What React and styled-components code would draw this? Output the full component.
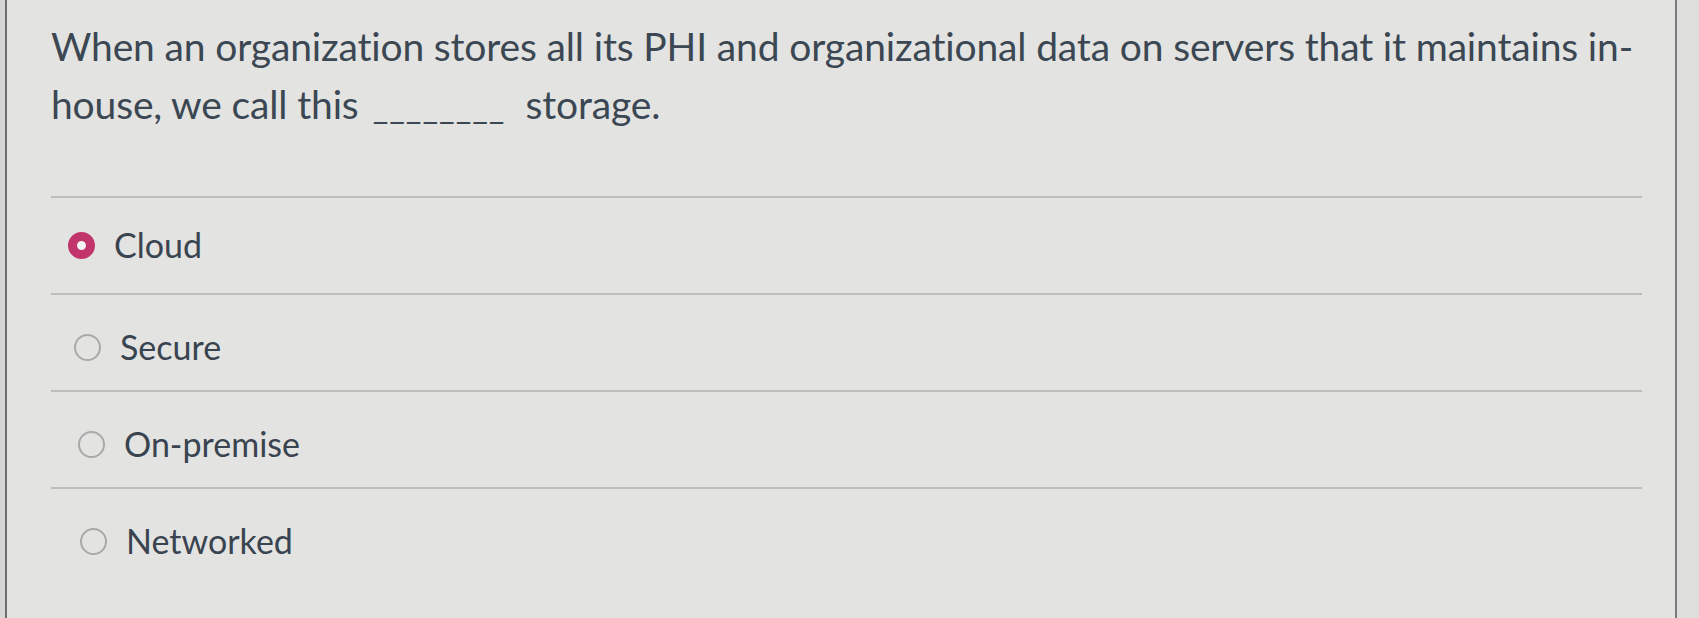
import React from "react";
import styled, { createGlobalStyle } from "styled-components";

const Global = createGlobalStyle`
  html, body { margin: 0; padding: 0; }
  body {
    background: #e3e3e1;
    font-family: Lato, "Noto Sans", sans-serif;
    overflow: hidden;
  }
`;

const Screen = styled.div`
  display: flex;
  width: 1699px;
  height: 618px;
  background: #e3e3e1;
`;

const LeftEdge = styled.div`
  width: 5px;
  flex: none;
  background: #d6d6d4;
  border-right: 2px solid #6e6e70;
`;

const RightEdge = styled.div`
  width: 22px;
  flex: none;
  background: #dedfdd;
  border-left: 2px solid #7a7a7c;
`;

const Content = styled.div`
  flex: 1;
  padding: 17px 0 0 44px;
  box-sizing: border-box;
`;

const Column = styled.div`
  width: 1591px;
`;

const Question = styled.p`
  margin: 0;
  font-size: 39px;
  line-height: 58px;
  letter-spacing: -0.15px;
  color: #3b4753;
  font-weight: 400;
`;

const Blank = styled.span`
  display: inline-block;
  font-size: 34px;
  letter-spacing: 1px;
  margin: 0 20px 0 14px;
`;

const Answers = styled.div`
  margin-top: 61px;
  display: flex;
  flex-direction: column;
`;

const Row = styled.div`
  display: flex;
  align-items: flex-start;
  height: 97px;
  box-sizing: border-box;
  border-top: 2px solid #bdbdbb;
  padding: ${(p) => p.$top}px 0 0 ${(p) => p.$indent}px;
  gap: 19px;
`;

const Radio = styled.span`
  flex: none;
  width: 27px;
  height: 27px;
  margin-top: 7px;
  border-radius: 50%;
  box-sizing: border-box;
  background: ${(p) => (p.$checked ? "#f4f2f2" : "transparent")};
  border: ${(p) => (p.$checked ? "9px solid #c2346c" : "2px solid #a9a9a9")};
`;

const Label = styled.span`
  font-size: 34px;
  line-height: 40px;
  color: #394450;
`;

const answers = [
  { text: "Cloud", checked: true, indent: 17, top: 27 },
  { text: "Secure", checked: false, indent: 23, top: 32 },
  { text: "On-premise", checked: false, indent: 27, top: 32 },
  { text: "Networked", checked: false, indent: 29, top: 32 },
];

export default function App() {
  return (
    <>
      <Global />
      <Screen>
        <LeftEdge />
        <Content>
          <Column>
            <Question>
              When an organization stores all its PHI and organizational data on
              servers that it maintains in-house, we call this<Blank>________</Blank>storage.
            </Question>
            <Answers>
              {answers.map((a) => (
                <Row key={a.text} $indent={a.indent} $top={a.top}>
                  <Radio $checked={a.checked} />
                  <Label>{a.text}</Label>
                </Row>
              ))}
            </Answers>
          </Column>
        </Content>
        <RightEdge />
      </Screen>
    </>
  );
}
